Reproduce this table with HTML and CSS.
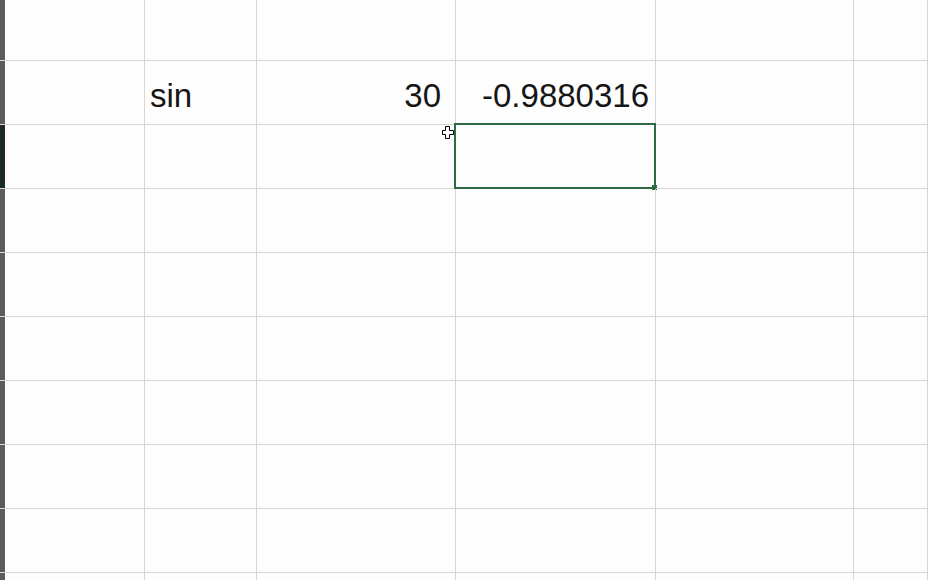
FILE: index.html
```html
<!DOCTYPE html>
<html>
<head>
<meta charset="utf-8">
<link rel="stylesheet" href="styles.css">
</head>
<body>
<div class="sheet">
  <div class="headers">
    <div class="rh first"></div>
    <div class="rh"></div>
    <div class="rh sel"></div>
    <div class="rh"></div>
    <div class="rh"></div>
    <div class="rh"></div>
    <div class="rh"></div>
    <div class="rh"></div>
    <div class="rh"></div>
    <div class="rh"></div>
  </div>
  <div class="grid">
    <!-- row 1 -->
    <div class="c"></div><div class="c"></div><div class="c"></div><div class="c"></div><div class="c"></div><div class="c"></div>
    <!-- row 2 -->
    <div class="c"></div><div class="c txt">sin</div><div class="c num n30">30</div><div class="c num nres">-0.9880316</div><div class="c"></div><div class="c"></div>
    <!-- row 3 -->
    <div class="c"></div><div class="c"></div><div class="c"></div><div class="c active"><span class="handle"></span></div><div class="c"></div><div class="c"></div>
    <!-- row 4..9 -->
    <div class="c"></div><div class="c"></div><div class="c"></div><div class="c"></div><div class="c"></div><div class="c"></div>
    <div class="c"></div><div class="c"></div><div class="c"></div><div class="c"></div><div class="c"></div><div class="c"></div>
    <div class="c"></div><div class="c"></div><div class="c"></div><div class="c"></div><div class="c"></div><div class="c"></div>
    <div class="c"></div><div class="c"></div><div class="c"></div><div class="c"></div><div class="c"></div><div class="c"></div>
    <div class="c"></div><div class="c"></div><div class="c"></div><div class="c"></div><div class="c"></div><div class="c"></div>
    <div class="c"></div><div class="c"></div><div class="c"></div><div class="c"></div><div class="c"></div><div class="c"></div>
    <div class="c"></div><div class="c"></div><div class="c"></div><div class="c"></div><div class="c"></div><div class="c"></div>
  </div>
</div>
<svg class="cursor" width="14" height="16" viewBox="0 0 14 16">
  <path d="M3.5 0.5 H7.5 V4.5 H11.5 V8.5 H7.5 V12.5 H3.5 V8.5 H0.5 V4.5 H3.5 Z" fill="#fff" stroke="#000" stroke-width="1"/>
</svg>
</body>
</html>
```
FILE: styles.css
```css
html, body {
  margin: 0;
  padding: 0;
  background: #fdfdfd;
  overflow: hidden;
  width: 928px;
  height: 580px;
}
.sheet {
  display: flex;
  width: 928px;
  height: 580px;
  overflow: hidden;
}
.headers {
  display: flex;
  flex-direction: column;
  width: 5px;
  flex: none;
}
.rh {
  height: 64px;
  flex: none;
  box-sizing: border-box;
  background: #5c5c5c;
  border-bottom: 1px solid #d8d8d8;
}
.rh.first { height: 61px; }
.rh.sel { background: #1c2b22; }
.grid {
  display: grid;
  grid-template-columns: 140px 112px 199px 200px 198px 74px;
  grid-template-rows: 61px repeat(9, 64px);
  flex: none;
}
.c {
  box-sizing: border-box;
  border-right: 1px solid #d6d6d6;
  border-bottom: 1px solid #d6d6d6;
  position: relative;
  font-family: "Liberation Sans", Arial, sans-serif;
  font-size: 33px;
  line-height: 36px;
  color: #151515;
  white-space: nowrap;
}
.txt {
  padding: 17px 0 0 5px;
}
.num {
  text-align: right;
  padding-top: 17px;
}
.n30 { padding-right: 14px; }
.nres { padding-right: 6px; }
.active::before {
  content: "";
  position: absolute;
  left: -2px;
  top: -2px;
  right: -1px;
  bottom: -1px;
  border: 2px solid #2f6a47;
}
.handle {
  position: absolute;
  right: -2px;
  bottom: -2px;
  width: 5px;
  height: 5px;
  background: #2f6a47;
}
.cursor {
  position: absolute;
  left: 442px;
  top: 126px;
}
```
